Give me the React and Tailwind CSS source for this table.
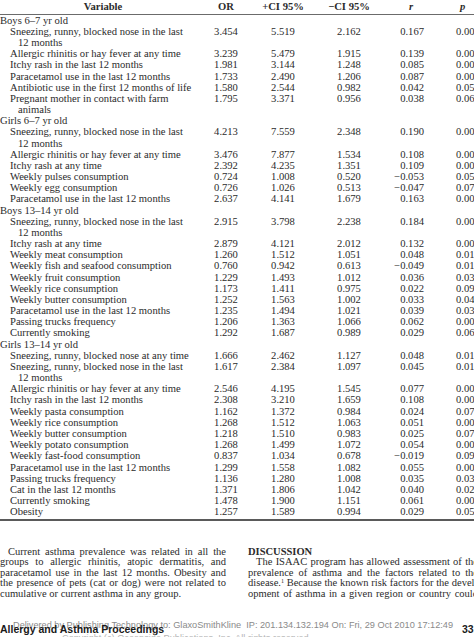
const groups = [
  {
    title: 'Boys 6–7 yr old',
    rows: [
      ['Sneezing, runny, blocked nose in the last', '3.454', '5.519', '2.162', '0.167', '0.000', '12 months'],
      ['Allergic rhinitis or hay fever at any time', '3.239', '5.479', '1.915', '0.139', '0.000'],
      ['Itchy rash in the last 12 months', '1.981', '3.144', '1.248', '0.085', '0.004'],
      ['Paracetamol use in the last 12 months', '1.733', '2.490', '1.206', '0.087', '0.003'],
      ['Antibiotic use in the first 12 months of life', '1.580', '2.544', '0.982', '0.042', '0.059'],
      ['Pregnant mother in contact with farm', '1.795', '3.371', '0.956', '0.038', '0.069', 'animals'],
    ],
  },
  {
    title: 'Girls 6–7 yr old',
    rows: [
      ['Sneezing, runny, blocked nose in the last', '4.213', '7.559', '2.348', '0.190', '0.000', '12 months'],
      ['Allergic rhinitis or hay fever at any time', '3.476', '7.877', '1.534', '0.108', '0.003'],
      ['Itchy rash at any time', '2.392', '4.235', '1.351', '0.109', '0.003'],
      ['Weekly pulses consumption', '0.724', '1.008', '0.520', '−0.053', '0.056'],
      ['Weekly egg consumption', '0.726', '1.026', '0.513', '−0.047', '0.070'],
      ['Paracetamol use in the last 12 months', '2.637', '4.141', '1.679', '0.163', '0.000'],
    ],
  },
  {
    title: 'Boys 13–14 yr old',
    rows: [
      ['Sneezing, runny, blocked nose in the last', '2.915', '3.798', '2.238', '0.184', '0.000', '12 months'],
      ['Itchy rash at any time', '2.879', '4.121', '2.012', '0.132', '0.000'],
      ['Weekly meat consumption', '1.260', '1.512', '1.051', '0.048', '0.013'],
      ['Weekly fish and seafood consumption', '0.760', '0.942', '0.613', '−0.049', '0.012'],
      ['Weekly fruit consumption', '1.229', '1.493', '1.012', '0.036', '0.037'],
      ['Weekly rice consumption', '1.173', '1.411', '0.975', '0.022', '0.091'],
      ['Weekly butter consumption', '1.252', '1.563', '1.002', '0.033', '0.048'],
      ['Paracetamol use in the last 12 months', '1.235', '1.494', '1.021', '0.039', '0.030'],
      ['Passing trucks frequency', '1.206', '1.363', '1.066', '0.062', '0.003'],
      ['Currently smoking', '1.292', '1.687', '0.989', '0.029', '0.060'],
    ],
  },
  {
    title: 'Girls 13–14 yr old',
    rows: [
      ['Sneezing, runny, blocked nose at any time', '1.666', '2.462', '1.127', '0.048', '0.010'],
      ['Sneezing, runny, blocked nose in the last', '1.617', '2.384', '1.097', '0.045', '0.015', '12 months'],
      ['Allergic rhinitis or hay fever at any time', '2.546', '4.195', '1.545', '0.077', '0.000'],
      ['Itchy rash in the last 12 months', '2.308', '3.210', '1.659', '0.108', '0.000'],
      ['Weekly pasta consumption', '1.162', '1.372', '0.984', '0.024', '0.077'],
      ['Weekly rice consumption', '1.268', '1.512', '1.063', '0.051', '0.008'],
      ['Weekly butter consumption', '1.218', '1.510', '0.983', '0.025', '0.071'],
      ['Weekly potato consumption', '1.268', '1.499', '1.072', '0.054', '0.006'],
      ['Weekly fast-food consumption', '0.837', '1.034', '0.678', '−0.019', '0.099'],
      ['Paracetamol use in the last 12 months', '1.299', '1.558', '1.082', '0.055', '0.005'],
      ['Passing trucks frequency', '1.136', '1.280', '1.008', '0.035', '0.036'],
      ['Cat in the last 12 months', '1.371', '1.806', '1.042', '0.040', '0.025'],
      ['Currently smoking', '1.478', '1.900', '1.151', '0.061', '0.002'],
      ['Obesity', '1.257', '1.589', '0.994', '0.029', '0.056'],
    ],
  },
];

function Row({ label, or, up, lo, r, p }) {
  return (
    <div className="flex h-[11.18px] items-center whitespace-nowrap">
      <div className="w-[206px] pl-[10px]">{label}</div>
      <div className="w-[40px] text-center">{or}</div>
      <div className="w-[74px] text-center">{up}</div>
      <div className="w-[58px] text-center">{lo}</div>
      <div className="w-[48px] pr-[2px] text-right">{r}</div>
      <div className="w-[60px] pl-[30px]">{p}</div>
    </div>
  );
}

const leftPara = [
  'Current asthma prevalence was related in all the',
  'groups to allergic rhinitis, atopic dermatitis, and',
  'paracetamol use in the last 12 months. Obesity and',
  'the presence of pets (cat or dog) were not related to',
];

export default function App() {
  return (
    <div className="relative h-[637px] w-[474px] overflow-hidden bg-white text-[#2b2b2b] font-['Liberation_Serif',serif] text-[10.6px]">
      {/* Table */}
      <div className="w-[486px]">
        <div className="flex h-[15px] items-center border-b border-[#6b6b6b] whitespace-nowrap font-bold">
          <div className="w-[206px] text-center">Variable</div>
          <div className="w-[40px] text-center">OR</div>
          <div className="w-[74px] text-center">+CI 95%</div>
          <div className="w-[58px] text-center">−CI 95%</div>
          <div className="w-[48px] pr-[13px] text-right italic">r</div>
          <div className="w-[60px] pl-[34px] italic">p</div>
        </div>
        <div className="border-b-2 border-[#5a5a5a] pb-[1px]">
          {groups.map((g) => (
            <div key={g.title}>
              <div className="flex h-[11.18px] items-center">{g.title}</div>
              {g.rows.map((row, i) => (
                <div key={i}>
                  <Row label={row[0]} or={row[1]} up={row[2]} lo={row[3]} r={row[4]} p={row[5]} />
                  {row[6] && (
                    <div className="flex h-[11.18px] items-center pl-[18px]">{row[6]}</div>
                  )}
                </div>
              ))}
            </div>
          ))}
        </div>
      </div>

      {/* Body text */}
      <div className="mt-[26px] flex gap-[22px] text-[10.5px] leading-[10.5px]">
        <div className="w-[226px] shrink-0">
          {leftPara.map((line, i) => (
            <div key={i} className={`text-justify [text-align-last:justify] ${i === 0 ? 'pl-[8px]' : ''}`}>
              {line}
            </div>
          ))}
          <div>cumulative or current asthma in any group.</div>
        </div>
        <div className="w-[230px] shrink-0 whitespace-nowrap">
          <div className="font-bold">DISCUSSION</div>
          <div className="pl-[8px] text-justify [text-align-last:justify]">The ISAAC program has allowed assessment of the</div>
          <div className="text-justify [text-align-last:justify]">prevalence of asthma and the factors related to the</div>
          <div className="text-justify [text-align-last:justify]">
            disease.<sup className="text-[6px]">1</sup> Because the known risk factors for the devel-
          </div>
          <div className="text-justify [text-align-last:justify]">opment of asthma in a given region or country could</div>
        </div>
      </div>

      {/* Footer */}
      <div className="absolute left-0 right-0 top-[619px] h-[18px] font-['Liberation_Sans',sans-serif]">
        <div className="absolute left-[13px] top-0 whitespace-nowrap text-[9.2px] text-[#8a8a8a]">
          Delivered by Publishing Technology to: GlaxoSmithKline&nbsp; IP: 201.134.132.194 On: Fri, 29 Oct 2010 17:12:49
        </div>
        <div className="absolute left-0 top-[3px] text-[10.5px] font-bold text-[#1a1a1a]">Allergy and Asthma Proceedings</div>
        <div className="absolute left-[462px] top-[3px] text-[10.5px] font-bold text-[#1a1a1a]">331</div>
        <div className="absolute left-[62px] top-[13px] whitespace-nowrap text-[9.2px] text-[#b5b5b5]">
          Copyright (c) Oceanside Publications, Inc. All rights reserved.
        </div>
      </div>
    </div>
  );
}
